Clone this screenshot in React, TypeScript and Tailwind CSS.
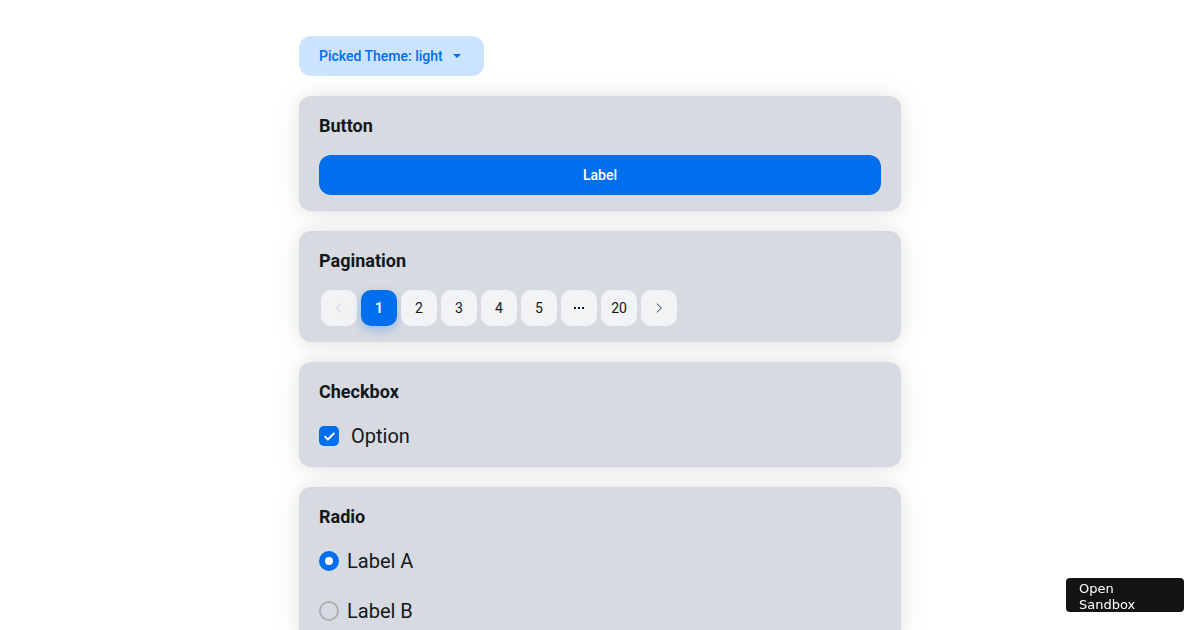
import React from "react";

const font = { fontFamily: "Roboto, 'Noto Sans', sans-serif" };

function Card({ title, children }: { title: string; children: React.ReactNode }) {
  return (
    <section className="rounded-xl bg-[#d7dae0] px-5 pt-5 pb-4 shadow-[0_0_15px_0_rgba(0,0,0,0.06),0_2px_30px_0_rgba(0,0,0,0.08)]">
      <h2 className="text-[18px] font-bold leading-5 text-[#11181c]">{title}</h2>
      <div className="mt-[19px]">{children}</div>
    </section>
  );
}

function ChevronLeft({ className }: { className?: string }) {
  return (
    <svg className={className} width="14" height="14" viewBox="0 0 24 24" fill="none" stroke="currentColor" strokeWidth="1.5" strokeLinecap="round" strokeLinejoin="round">
      <path d="M15 5l-7 7 7 7" />
    </svg>
  );
}

function ChevronRight({ className }: { className?: string }) {
  return (
    <svg className={className} width="14" height="14" viewBox="0 0 24 24" fill="none" stroke="currentColor" strokeWidth="1.5" strokeLinecap="round" strokeLinejoin="round">
      <path d="M9 5l7 7-7 7" />
    </svg>
  );
}

function PageItem({ children, active }: { children: React.ReactNode; active?: boolean }) {
  return (
    <button
      className={
        active
          ? "flex h-9 w-9 items-center justify-center rounded-[10px] bg-[#006fee] text-[14px] font-semibold text-white shadow-[0_4px_10px_rgba(0,111,238,0.3)]"
          : "flex h-9 w-9 items-center justify-center rounded-[10px] bg-[#f1f3f5] text-[14px] text-[#11181c]"
      }
    >
      {children}
    </button>
  );
}

export default function App() {
  return (
    <div className="min-h-screen bg-white" style={font}>
      <div className="mx-auto flex w-[602px] flex-col gap-5 pt-9">
        {/* theme picker */}
        <div>
          <button className="flex h-10 items-center gap-[9px] rounded-xl bg-[#cce3fd] pl-5 pr-[22px] text-[14px] font-medium text-[#006fee]">
            Picked Theme: light
            <svg width="10" height="10" viewBox="0 0 10 10">
              <path d="M1 3h8L5 7z" fill="currentColor" />
            </svg>
          </button>
        </div>

        <Card title="Button">
          <button className="flex h-10 w-full items-center justify-center rounded-xl bg-[#006fee] text-[14px] font-medium text-white">
            Label
          </button>
        </Card>

        <Card title="Pagination">
          <div className="ml-[2px] flex gap-1">
            <PageItem>
              <ChevronLeft className="text-[#c4c6cc]" />
            </PageItem>
            <PageItem active>1</PageItem>
            <PageItem>2</PageItem>
            <PageItem>3</PageItem>
            <PageItem>4</PageItem>
            <PageItem>5</PageItem>
            <PageItem>
              <svg width="10" height="2" viewBox="0 0 10 2" fill="#11181c">
                <rect x="0" y="0" width="2" height="2" />
                <rect x="4" y="0" width="2" height="2" />
                <rect x="8" y="0" width="2" height="2" />
              </svg>
            </PageItem>
            <PageItem>20</PageItem>
            <PageItem>
              <ChevronRight className="text-[#11181c]" />
            </PageItem>
          </div>
        </Card>

        <Card title="Checkbox">
          <label className="flex h-[30px] items-center gap-3">
            <span className="flex h-5 w-5 items-center justify-center rounded-[5px] bg-[#006fee]">
              <svg width="13" height="13" viewBox="0 0 24 24" fill="none" stroke="white" strokeWidth="3.5" strokeLinecap="round" strokeLinejoin="round">
                <path d="M4 12.5l5 5L20 6.5" />
              </svg>
            </span>
            <span className="text-[20px] text-[#11181c]">Option</span>
          </label>
        </Card>

        <Card title="Radio">
          <div className="flex flex-col gap-5">
            <label className="flex h-[30px] items-center gap-2">
              <span className="flex h-5 w-5 items-center justify-center rounded-full bg-[#006fee]">
                <span className="h-2 w-2 rounded-full bg-white" />
              </span>
              <span className="text-[20px] text-[#11181c]">Label A</span>
            </label>
            <label className="flex h-[30px] items-center gap-2">
              <span className="h-5 w-5 rounded-full border-2 border-[#aeaeb4]" />
              <span className="text-[20px] text-[#11181c]">Label B</span>
            </label>
          </div>
        </Card>
      </div>

      <a
        className="fixed bottom-[18px] right-4 block h-[34px] w-[118px] rounded bg-[#131415] pl-[13px] pt-[3px] text-[13px] leading-4 text-white"
        style={{ fontFamily: "'DejaVu Sans', sans-serif" }}
      >
        Open
        <br />
        Sandbox
      </a>
    </div>
  );
}
